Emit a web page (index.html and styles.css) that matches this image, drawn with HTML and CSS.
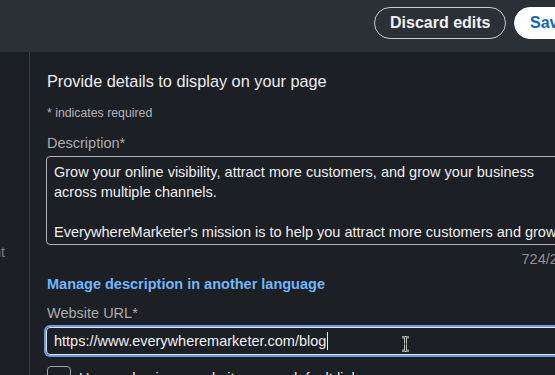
FILE: index.html
```html
<!DOCTYPE html>
<html lang="en">
<head>
    <meta charset="UTF-8">
    <meta name="viewport" content="width=device-width, initial-scale=1.0">
    <title>Edit page details</title>
    <link rel="stylesheet" href="styles.css">
</head>
<body>
    <div class="page">
        <div class="topbar">
            <button class="btn btn-outline">Discard edits</button>
            <button class="btn btn-primary">Save</button>
        </div>
        <div class="main">
            <div class="sidebar">
                <div class="side-item">Page content</div>
            </div>
            <div class="content">
                <h2 class="section-title">Provide details to display on your page</h2>
                <p class="required-note">* indicates required</p>

                <label class="field-label">Description*</label>
                <div class="textarea">
                    <div class="line">Grow your online visibility, attract more customers, and grow your business</div>
                    <div class="line">across multiple channels.</div>
                    <div class="line">&nbsp;</div>
                    <div class="line">EverywhereMarketer's mission is to help you attract more customers and grow your business online.</div>
                </div>
                <div class="counter">724/2000</div>

                <a class="lang-link" href="#">Manage description in another language</a>

                <label class="field-label url-label">Website URL*</label>
                <div class="input focused">
                    <span>https://www.everywheremarketer.com/blog</span><span class="caret"></span>
                    <svg class="ibeam" width="9" height="16" viewBox="0 0 9 16">
                        <path d="M1 1h2.5c.6 0 1 .4 1 1 0-.6.4-1 1-1H8M1 15h2.5c.6 0 1-.4 1-1 0 .6.4 1 1 1H8M4.5 2v12M3 8h3" fill="none" stroke="#fff" stroke-width="2.4"/>
                        <path d="M1 1h2.5c.6 0 1 .4 1 1 0-.6.4-1 1-1H8M1 15h2.5c.6 0 1-.4 1-1 0 .6.4 1 1 1H8M4.5 2v12M3 8h3" fill="none" stroke="#222" stroke-width="1"/>
                    </svg>
                </div>

                <div class="check-row">
                    <span class="checkbox"></span>
                    <span class="check-text">Use my business website as my default link</span>
                </div>
            </div>
        </div>
    </div>
</body>
</html>
```

FILE: styles.css
```css
body {
    margin: 0;
    background: #1c1f23;
    font-family: "Liberation Sans", Arial, sans-serif;
    color: #e6e7e8;
    overflow: hidden;
}

.page {
    width: 600px;
}

.topbar {
    height: 52px;
    background: #2b3037;
    display: flex;
    align-items: flex-start;
    justify-content: flex-end;
    gap: 8px;
    padding: 7px 16px 0 0;
    box-sizing: border-box;
}

.btn {
    height: 32px;
    border-radius: 16px;
    font-family: inherit;
    font-size: 16px;
    font-weight: bold;
    padding: 0 15px;
    white-space: nowrap;
    cursor: pointer;
}

.btn-outline {
    background: transparent;
    color: #f2f2f2;
    border: 1px solid #c9cbce;
    width: 132px;
}

.btn-primary {
    background: #ffffff;
    color: #0a66c2;
    border: 1px solid #ffffff;
    width: 70px;
    text-align: left;
}

.main {
    display: flex;
    min-height: 330px;
}

.sidebar {
    width: 29px;
    border-right: 1px solid #383c42;
    flex-shrink: 0;
    padding-top: 192px;
}

.side-item {
    display: flex;
    justify-content: flex-end;
    overflow: hidden;
    white-space: nowrap;
    padding-right: 24px;
    font-size: 14.5px;
    color: #7b7f84;
}

.content {
    flex-grow: 1;
    min-width: 0;
    padding: 17px 18px 0 17px;
}

.section-title {
    margin: 0;
    font-size: 16.3px;
    font-weight: normal;
    line-height: 24px;
    color: #ececed;
}

.required-note {
    margin: 12px 0 0;
    font-size: 12.3px;
    line-height: 16px;
    color: #b2b4b7;
}

.field-label {
    display: block;
    margin-top: 13px;
    font-size: 14.5px;
    line-height: 18px;
    color: #a9acb0;
}

.url-label {
    margin-top: 11px;
}

.textarea {
    margin-top: 4px;
    margin-left: -1px;
    border: 1px solid #aeb1b5;
    border-radius: 4px;
    padding: 5px 7px 2px;
    overflow: hidden;
}

.line {
    font-size: 14.5px;
    line-height: 20px;
    white-space: nowrap;
    color: #eeeeef;
}

.counter {
    text-align: right;
    font-size: 14.5px;
    line-height: 18px;
    margin-top: 5px;
    color: #8e9196;
}

.lang-link {
    display: block;
    margin-top: 7px;
    font-size: 14.5px;
    line-height: 18px;
    font-weight: bold;
    color: #71b7fb;
    text-decoration: none;
}

.input {
    position: relative;
    margin-top: 5px;
    margin-left: -1px;
    height: 26px;
    border: 1px solid #dbe8f8;
    border-radius: 4px;
    padding: 0 7px;
    display: flex;
    align-items: center;
    font-size: 14.5px;
    color: #f0f0f1;
}

.input.focused {
    box-shadow: 0 0 0 2px #6b9be0;
}

.caret {
    width: 1px;
    height: 18px;
    background: #f0f0f0;
    margin-left: 1px;
}

.ibeam {
    position: absolute;
    left: 354px;
    top: 8px;
}

.check-row {
    display: flex;
    align-items: center;
    gap: 8px;
    margin-top: 11px;
}

.checkbox {
    width: 22px;
    height: 22px;
    border: 1px solid #a0a3a8;
    border-radius: 4px;
    flex-shrink: 0;
}

.check-text {
    font-size: 14.5px;
    color: #e6e7e8;
}
```
